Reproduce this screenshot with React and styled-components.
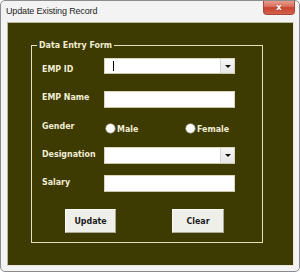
import React from "react";
import styled, { createGlobalStyle } from "styled-components";

const Global = createGlobalStyle`
  html, body { margin: 0; padding: 0; background: #ffffff; }
  body { width: 300px; height: 272px; overflow: hidden; }
`;

const Window = styled.div`
  box-sizing: border-box;
  width: 300px;
  height: 272px;
  display: flex;
  flex-direction: column;
  background: #f3f3f3;
  border: 1px solid #8c8c8c;
  border-radius: 5px;
  overflow: hidden;
`;

const TitleBar = styled.div`
  height: 21px;
  display: flex;
  align-items: flex-start;
  padding-left: 5px;
  padding-right: 4px;
`;

const Title = styled.div`
  font-family: "Liberation Sans", Arial, sans-serif;
  font-size: 9px;
  letter-spacing: -0.15px;
  color: #1e1e1e;
  line-height: 11px;
  margin-top: 5px;
`;

const CloseButton = styled.div`
  margin-left: auto;
  margin-top: -1px;
  width: 32px;
  height: 15px;
  box-sizing: border-box;
  border: 1px solid #a8483c;
  border-top: none;
  border-radius: 0 0 4px 4px;
  background: linear-gradient(#eaa394, #d9735f 45%, #c7432f 55%, #d2614c);
  display: flex;
  align-items: center;
  justify-content: center;
  color: #ffffff;
  font-family: "DejaVu Sans", sans-serif;
  font-weight: bold;
  font-size: 9px;
  line-height: 9px;
  text-shadow: 0 0 1px #7a2418;
`;

const Panel = styled.div`
  flex: 1;
  margin: 0 5px 5px 6px;
  display: flex;
  background: #3d3a02;
  border: 1px solid #b9b8a6;
  border-right-color: #e8e8dc;
  border-bottom-color: #e8e8dc;
  padding: 16px 30px 22px 23px;
`;

const Frame = styled.fieldset`
  flex: 1;
  margin: 0;
  padding: 0;
  min-width: 0;
  border: 1px solid #e4e0c2;
  display: flex;
  flex-direction: column;
`;

const font = `
  font-family: "DejaVu Sans Condensed", "DejaVu Sans", sans-serif;
  font-stretch: condensed;
  font-weight: bold;
  font-size: 8.8px;
`;

const Legend = styled.legend`
  ${font}
  color: #f1edd4;
  line-height: 12px;
  padding: 0 2px;
  margin-left: 5px;
`;

const Form = styled.div`
  display: flex;
  flex-direction: column;
  padding: 1px 0 0 10px;
`;

const Row = styled.div`
  height: 28px;
  display: grid;
  grid-template-columns: 62px 131px;
  align-items: center;
  &:first-child {
    margin-bottom: 5px;
  }
`;

const Label = styled.div`
  ${font}
  color: #f1edd4;
  line-height: 10px;
  transform: translateY(${(p) => p.$dy || 0}px);
`;

const Field = styled.div`
  box-sizing: border-box;
  height: ${(p) => p.$h || 16}px;
  background: #ffffff;
  border: 1px solid #d9d6bd;
  border-bottom-color: #c9c6a8;
  display: flex;
  align-items: stretch;
`;

const Caret = styled.div`
  width: 1px;
  margin: 2px 0 2px 8px;
  background: #000000;
`;

const DropButton = styled.div`
  margin-left: auto;
  width: 13px;
  background: linear-gradient(#f6f6f6, #e6e6e6);
  border-left: 1px solid #d6d6d6;
  display: flex;
  align-items: center;
  justify-content: center;
`;

const Arrow = styled.div`
  width: 0;
  height: 0;
  border-left: 3px solid transparent;
  border-right: 3px solid transparent;
  border-top: 3px solid #111111;
`;

const Radios = styled.div`
  display: grid;
  grid-template-columns: 80px auto;
  padding-left: 2px;
  padding-top: 3px;
`;

const RadioOption = styled.div`
  display: flex;
  align-items: center;
  gap: 2px;
`;

const RadioDot = styled.div`
  width: 9px;
  height: 9px;
  border-radius: 50%;
  background: radial-gradient(circle at 40% 40%, #ffffff 0 50%, #dcdcd4 85%);
  box-shadow: 0 0 0 0.5px #c4c4b8;
`;

const RadioText = styled.span`
  ${font}
  color: #f1edd4;
  line-height: 10px;
`;

const Buttons = styled.div`
  display: flex;
  gap: 56px;
  padding-left: 33px;
  margin-top: 12px;
`;

const Button = styled.div`
  box-sizing: border-box;
  width: ${(p) => p.$w || 51}px;
  height: 24px;
  background: #efefea;
  border: 1px solid #fafaf6;
  border-right-color: #a9a89a;
  border-bottom-color: #a9a89a;
  display: flex;
  align-items: center;
  justify-content: center;
  ${font}
  color: #1c1c1c;
`;

export default function App() {
  return (
    <>
      <Global />
      <Window>
        <TitleBar>
          <Title>Update Existing Record</Title>
          <CloseButton>x</CloseButton>
        </TitleBar>
        <Panel>
          <Frame>
            <Legend>Data Entry Form</Legend>
            <Form>
              <Row>
                <Label $dy={3}>EMP ID</Label>
                <Field $h={16}>
                  <Caret />
                  <DropButton>
                    <Arrow />
                  </DropButton>
                </Field>
              </Row>
              <Row>
                <Label $dy={-2}>EMP Name</Label>
                <Field $h={17} />
              </Row>
              <Row>
                <Label $dy={-1}>Gender</Label>
                <Radios>
                  <RadioOption>
                    <RadioDot />
                    <RadioText>Male</RadioText>
                  </RadioOption>
                  <RadioOption>
                    <RadioDot />
                    <RadioText>Female</RadioText>
                  </RadioOption>
                </Radios>
              </Row>
              <Row>
                <Label $dy={-1}>Designation</Label>
                <Field $h={17}>
                  <DropButton>
                    <Arrow />
                  </DropButton>
                </Field>
              </Row>
              <Row>
                <Label $dy={-1}>Salary</Label>
                <Field $h={17} />
              </Row>
            </Form>
            <Buttons>
              <Button $w={51}>Update</Button>
              <Button $w={52}>Clear</Button>
            </Buttons>
          </Frame>
        </Panel>
      </Window>
    </>
  );
}
